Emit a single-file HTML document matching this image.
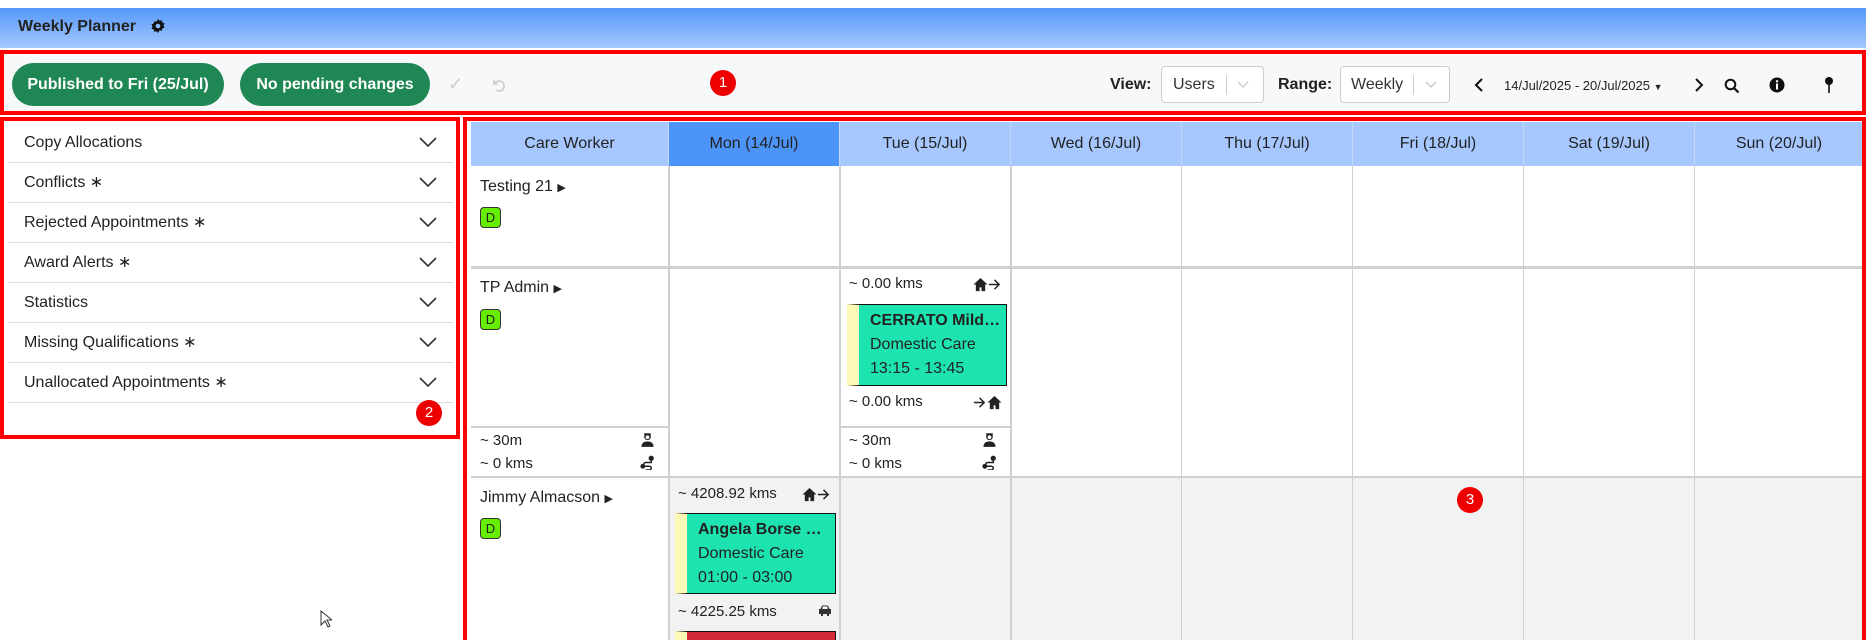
<!DOCTYPE html>
<html><head><meta charset="utf-8"><style>
*{box-sizing:border-box;margin:0;padding:0}
html,body{width:1866px;height:640px;overflow:hidden}
body{background:#fff;font-family:"Liberation Sans",sans-serif;color:#222;position:relative}
.a{position:absolute}
.hdr{left:0;top:8px;width:1866px;height:40px;background:linear-gradient(#5497fa,#a6c8fc)}
.rb{border:4px solid #f00}
.btn{background:#1e8753;color:#fff;font-weight:bold;font-size:16px;height:43px;border-radius:22px;display:flex;align-items:center;justify-content:center;top:63px}
.sel{top:66px;height:37px;background:#fff;border:1px solid #ccc;border-radius:4px;font-size:16px;color:#333}
.lbl{font-weight:bold;font-size:16px;top:76px}
.row{left:8px;width:445px;height:40px;border-bottom:1px solid #ddd;font-size:16px;line-height:40px;padding-left:16px}
.row svg{position:absolute;right:16px;top:14px}
.circ{width:26px;height:26px;border-radius:13px;background:#e00;color:#fff;font-size:15px;text-align:center;line-height:26px}
.th{top:122px;height:44px;background:#a6c8ff;font-size:16px;text-align:center;line-height:44px;border-right:1px solid #c4d8f5}
.vl{width:2px;background:#d0d0d0}
.hl{height:3px;background:#d0d0d0}
.t{font-size:16px}
.d{width:21px;height:21px;background:#66ee00;border:1px solid #333;border-radius:4px;font-size:13px;text-align:center;line-height:19px}
.card{background:#1de3b0;border:1px solid #111;border-left:12px solid #fff9b8;padding-left:11px;font-size:16px;line-height:24px;padding-top:4px}
</style></head><body>
<svg width="0" height="0" style="position:absolute"><defs>
<symbol id="home" viewBox="0 0 16 16"><path d="M8 1L0.5 8H3v7h4v-4h2v4h4V8h2.5z" fill="#222"/></symbol>
<symbol id="arr" viewBox="0 0 14 14"><path d="M1 7h11M7 2l5 5-5 5" fill="none" stroke="#222" stroke-width="1.6"/></symbol>
<symbol id="usr" viewBox="0 0 14 16"><circle cx="7" cy="5" r="3.6" fill="#222"/><rect x="3.5" y="1.3" width="7" height="2.2" fill="#222"/><path d="M0.5 16c0-4 2.5-6 6.5-6s6.5 2 6.5 6z" fill="#222"/><circle cx="7" cy="5.6" r="2" fill="#fff"/></symbol>
<symbol id="rt" viewBox="0 0 16 16"><circle cx="12" cy="3.5" r="2.8" fill="#222"/><circle cx="3" cy="12" r="2.6" fill="#222"/><path d="M12 6v2H6a2 2 0 0 0 0 4h4a2 2 0 0 1 0 4H6" fill="none" stroke="#222" stroke-width="1.6"/></symbol>
</defs></svg>
<div class="a hdr"></div>
<div class="a" style="left:18px;top:18px;font-weight:bold;font-size:16px">Weekly Planner</div>
<svg class="a" style="left:151px;top:19px" width="14" height="14" viewBox="0 0 14 14"><path d="M7 0l1.5 1.8 2.3-.6.5 2.3 2.2.9-1 2.1 1 2.1-2.2.9-.5 2.3-2.3-.6L7 14l-1.5-1.8-2.3.6-.5-2.3-2.2-.9 1-2.1-1-2.1 2.2-.9.5-2.3 2.3.6z" fill="#111"/><circle cx="7" cy="7" r="2.3" fill="#8ab6fb"/></svg>

<div class="a rb" style="left:0;top:50px;width:1866px;height:65px;background:#f7f8fa"></div>
<div class="a btn" style="left:12px;width:212px">Published to Fri (25/Jul)</div>
<div class="a btn" style="left:240px;width:190px">No pending changes</div>
<div class="a" style="left:448px;top:74px;color:#ccc;font-size:18px">✓</div>
<svg class="a" style="left:490px;top:77px" width="16" height="16" viewBox="0 0 16 16"><path d="M4 3v4h4M4.5 7A5 5 0 1 1 6 13" fill="none" stroke="#ccc" stroke-width="1.6"/></svg>
<div class="a circ" style="left:710px;top:70px">1</div>
<div class="a lbl" style="left:1110px">View:</div>
<div class="a sel" style="left:1161px;width:103px"><span class="a" style="left:11px;top:9px">Users</span><span class="a" style="left:64px;top:8px;width:1px;height:20px;background:#ccc"></span><svg class="a" style="left:75px;top:14px" width="12" height="8"><path d="M1 1l5 5 5-5" fill="none" stroke="#ccc" stroke-width="1.4"/></svg></div>
<div class="a lbl" style="left:1278px">Range:</div>
<div class="a sel" style="left:1340px;width:110px"><span class="a" style="left:10px;top:9px">Weekly</span><span class="a" style="left:72px;top:8px;width:1px;height:20px;background:#ccc"></span><svg class="a" style="left:84px;top:14px" width="12" height="8"><path d="M1 1l5 5 5-5" fill="none" stroke="#ccc" stroke-width="1.4"/></svg></div>
<svg class="a" style="left:1474px;top:78px" width="10" height="14"><path d="M8 1L2 7l6 6" fill="none" stroke="#111" stroke-width="2"/></svg>
<div class="a" style="left:1504px;top:78px;font-size:13px">14/Jul/2025 - 20/Jul/2025 <span style="font-size:9px">▼</span></div>
<svg class="a" style="left:1694px;top:78px" width="10" height="14"><path d="M2 1l6 6-6 6" fill="none" stroke="#111" stroke-width="2"/></svg>
<svg class="a" style="left:1724px;top:78px" width="16" height="16"><circle cx="6.5" cy="6.5" r="4.8" fill="none" stroke="#111" stroke-width="2"/><path d="M10 10l4.5 4.5" stroke="#111" stroke-width="2.2"/></svg>
<svg class="a" style="left:1769px;top:77px" width="16" height="16"><circle cx="8" cy="8" r="7.5" fill="#111"/><rect x="7" y="6.5" width="2" height="6" fill="#fff"/><circle cx="8" cy="4.3" r="1.2" fill="#fff"/></svg>
<svg class="a" style="left:1824px;top:76px" width="10" height="18"><circle cx="5" cy="5" r="4" fill="#111"/><rect x="4.2" y="8" width="1.6" height="9" fill="#111"/></svg>

<div class="a rb" style="left:0;top:117px;width:460px;height:322px"></div>
<div class="a row" style="top:123px">Copy Allocations<svg width="18" height="10"><path d="M1 1l8 8 8-8" fill="none" stroke="#333" stroke-width="1.6"/></svg></div>
<div class="a row" style="top:163px">Conflicts ∗<svg width="18" height="10"><path d="M1 1l8 8 8-8" fill="none" stroke="#333" stroke-width="1.6"/></svg></div>
<div class="a row" style="top:203px">Rejected Appointments ∗<svg width="18" height="10"><path d="M1 1l8 8 8-8" fill="none" stroke="#333" stroke-width="1.6"/></svg></div>
<div class="a row" style="top:243px">Award Alerts ∗<svg width="18" height="10"><path d="M1 1l8 8 8-8" fill="none" stroke="#333" stroke-width="1.6"/></svg></div>
<div class="a row" style="top:283px">Statistics<svg width="18" height="10"><path d="M1 1l8 8 8-8" fill="none" stroke="#333" stroke-width="1.6"/></svg></div>
<div class="a row" style="top:323px">Missing Qualifications ∗<svg width="18" height="10"><path d="M1 1l8 8 8-8" fill="none" stroke="#333" stroke-width="1.6"/></svg></div>
<div class="a row" style="top:363px">Unallocated Appointments ∗<svg width="18" height="10"><path d="M1 1l8 8 8-8" fill="none" stroke="#333" stroke-width="1.6"/></svg></div>
<div class="a circ" style="left:416px;top:400px">2</div>
<svg class="a" style="left:320px;top:610px" width="12" height="18"><path d="M1 1v14l4-4 3 6 2-1-3-6h5z" fill="#fff" stroke="#333"/></svg>

<div class="a" style="left:669px;top:478px;width:1195px;height:162px;background:#f2f2f2"></div>
<div class="a th" style="left:471px;width:198px">Care Worker</div>
<div class="a th" style="left:669px;width:171px;background:#4d94f8">Mon (14/Jul)</div>
<div class="a th" style="left:840px;width:171px">Tue (15/Jul)</div>
<div class="a th" style="left:1011px;width:171px">Wed (16/Jul)</div>
<div class="a th" style="left:1182px;width:171px">Thu (17/Jul)</div>
<div class="a th" style="left:1353px;width:171px">Fri (18/Jul)</div>
<div class="a th" style="left:1524px;width:171px">Sat (19/Jul)</div>
<div class="a th" style="left:1695px;width:169px">Sun (20/Jul)</div>
<div class="a vl" style="left:668px;top:166px;height:474px"></div>
<div class="a vl" style="left:839px;top:166px;height:474px"></div>
<div class="a vl" style="left:1010px;top:166px;height:474px"></div>
<div class="a vl" style="left:1181px;top:166px;height:474px;width:1px"></div>
<div class="a vl" style="left:1352px;top:166px;height:474px;width:1px"></div>
<div class="a vl" style="left:1523px;top:166px;height:474px;width:1px"></div>
<div class="a vl" style="left:1694px;top:166px;height:474px;width:1px"></div>
<div class="a hl" style="left:471px;top:266px;width:1393px"></div>
<div class="a hl" style="left:471px;top:476px;width:1393px;height:2px"></div>
<div class="a hl" style="left:471px;top:426px;width:198px;height:2px"></div>
<div class="a hl" style="left:840px;top:426px;width:171px;height:2px"></div>
<div class="a" style="left:463px;top:117px;width:1403px;height:523px;border:4px solid #f00;border-bottom:none"></div>

<div class="a t" style="left:480px;top:178px">Testing 21 <span style="font-size:11px">▶</span></div>
<div class="a d" style="left:480px;top:207px">D</div>
<div class="a t" style="left:480px;top:279px">TP Admin <span style="font-size:11px">▶</span></div>
<div class="a d" style="left:480px;top:309px">D</div>
<div class="a t" style="left:480px;top:432px;font-size:15px">~ 30m</div>
<div class="a t" style="left:480px;top:455px;font-size:15px">~ 0 kms</div>
<svg class="a" style="left:641px;top:432px" width="13" height="15"><use href="#usr"/></svg>
<svg class="a" style="left:640px;top:455px" width="15" height="15"><use href="#rt"/></svg>
<div class="a t" style="left:480px;top:489px">Jimmy Almacson <span style="font-size:11px">▶</span></div>
<div class="a d" style="left:480px;top:518px">D</div>

<div class="a t" style="left:849px;top:275px;font-size:15px">~ 0.00 kms</div>
<svg class="a" style="left:973px;top:277px" width="15" height="15"><use href="#home"/></svg>
<svg class="a" style="left:988px;top:278px" width="13" height="13"><use href="#arr"/></svg>
<div class="a card" style="left:847px;top:304px;width:160px;height:82px"><b style="white-space:nowrap">CERRATO Mild…</b><br>Domestic Care<br>13:15 - 13:45</div>
<div class="a t" style="left:849px;top:393px;font-size:15px">~ 0.00 kms</div>
<svg class="a" style="left:973px;top:396px" width="13" height="13"><use href="#arr"/></svg>
<svg class="a" style="left:987px;top:395px" width="15" height="15"><use href="#home"/></svg>
<div class="a t" style="left:849px;top:432px;font-size:15px">~ 30m</div>
<div class="a t" style="left:849px;top:455px;font-size:15px">~ 0 kms</div>
<svg class="a" style="left:983px;top:432px" width="13" height="15"><use href="#usr"/></svg>
<svg class="a" style="left:982px;top:455px" width="15" height="15"><use href="#rt"/></svg>

<div class="a t" style="left:678px;top:485px;font-size:15px">~ 4208.92 kms</div>
<svg class="a" style="left:802px;top:487px" width="15" height="15"><use href="#home"/></svg>
<svg class="a" style="left:817px;top:488px" width="13" height="13"><use href="#arr"/></svg>
<div class="a card" style="left:675px;top:513px;width:161px;height:81px"><b>Angela Borse …</b><br>Domestic Care<br>01:00 - 03:00</div>
<div class="a t" style="left:678px;top:603px;font-size:15px">~ 4225.25 kms</div>
<svg class="a" style="left:818px;top:604px" width="14" height="12" viewBox="0 0 14 12"><path d="M2.5 5L4 1.5h6L11.5 5H13v5h-2v2H9v-2H5v2H3v-2H1V5z" fill="#333"/><rect x="4.5" y="2.5" width="5" height="2.5" fill="#fff"/></svg>
<div class="a" style="left:675px;top:631px;width:161px;height:9px;background:#d42a3a;border:1px solid #111;border-bottom:none;border-left:12px solid #fff9b8"></div>
<div class="a circ" style="left:1457px;top:487px">3</div>
</body></html>
